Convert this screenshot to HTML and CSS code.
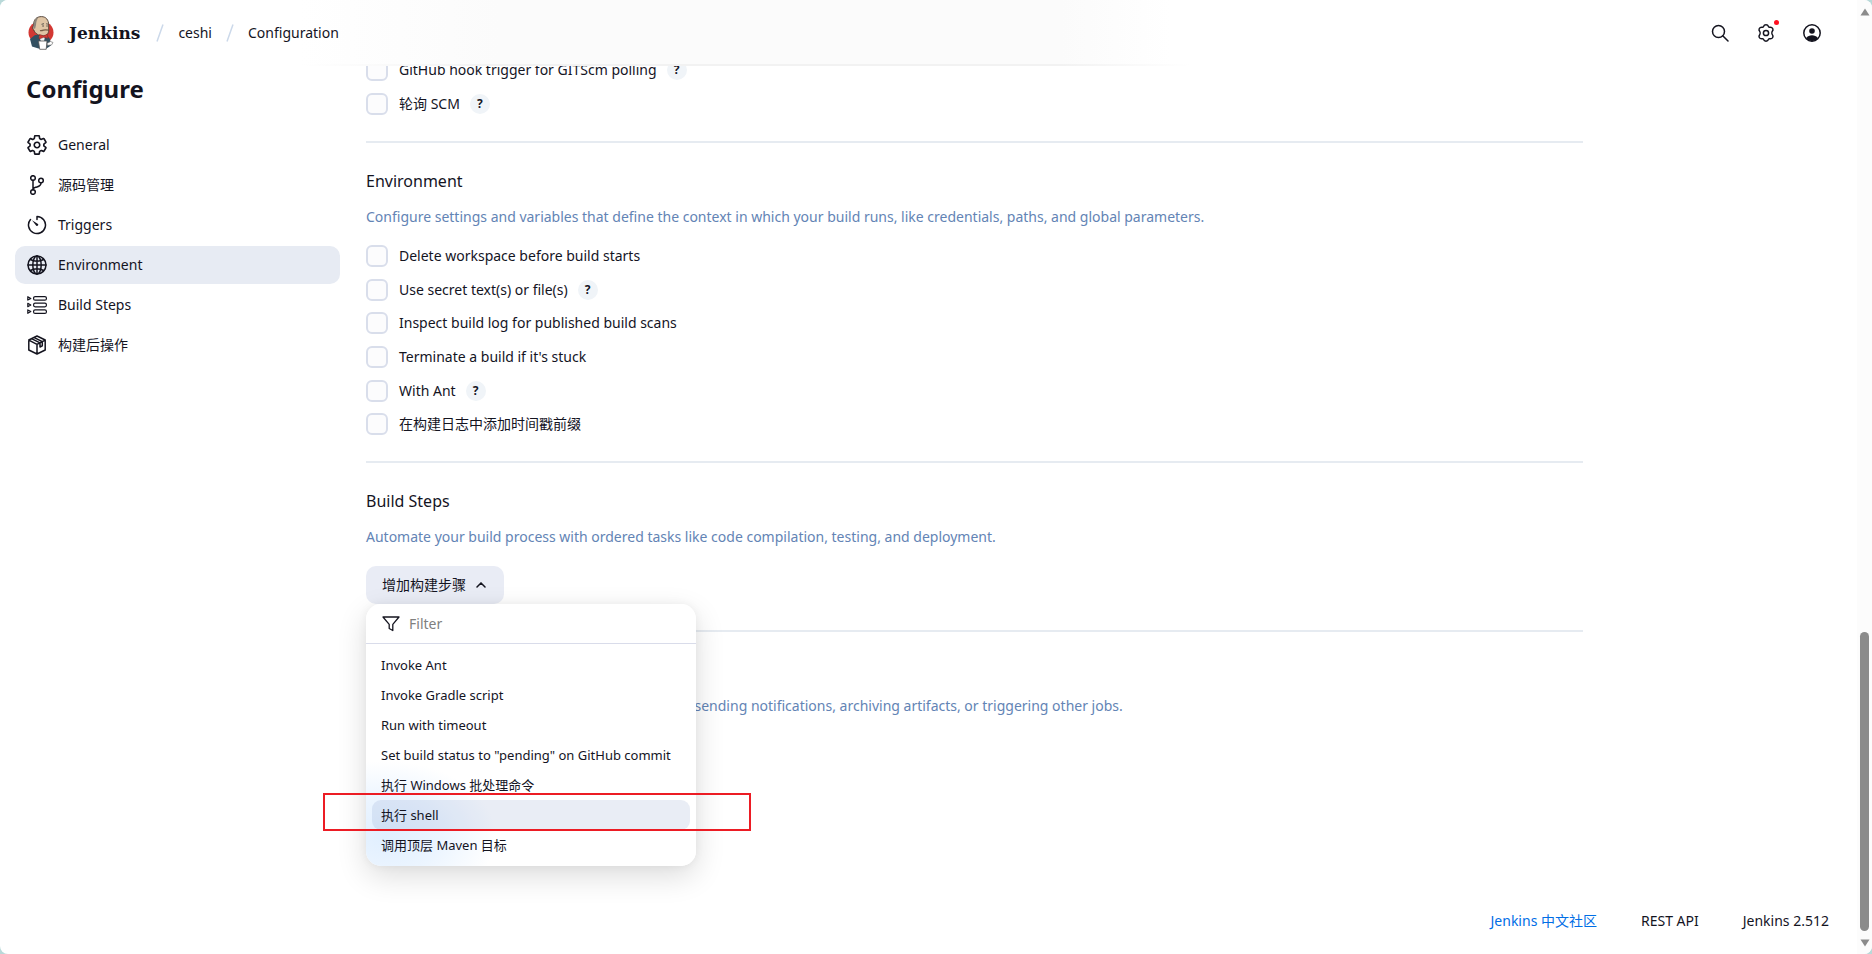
FILE: index.html
```html
<!DOCTYPE html>
<html lang="zh-CN">
<head>
<meta charset="utf-8">
<title>ceshi Config [Jenkins]</title>
<link rel="stylesheet" href="styles.css">
</head>
<body>
<div class="window">
  <div class="page">
    <header class="header">
      <a class="brand" href="#">
        <svg class="brand-logo" viewBox="0 0 26 34" aria-hidden="true">
          <ellipse cx="13" cy="16.500" rx="12.500" ry="11.500" fill="#d33833"/>
          <path d="M7 19 2 23l2 7.500 6.500 2h8l4.500-3-1-6.500-3.500-4z" fill="#335061"/>
          <path d="M11 20l2 5.500h3l1-5z" fill="#f3f3f3"/>
          <path d="M5.600 8C6 3 9 .6 13.500.6c4.500 0 7.200 3.400 7.200 8.400v5c0 4-2.500 6-5.700 6-4 0-8-2.500-9.200-6-1.400-.5-1.500-3.500-.2-4z" fill="#dfc5a5" stroke="#4a3b32" stroke-width=".9"/>
          <path d="M5.500 10C5.600 5 7.500 2 10.500 1.200 8.800 3.500 8.200 5.500 8 9l-.8 3.500-1.700.2z" fill="#8b857c"/>
          <path d="M13.500 8.300l2.500-.6M18.200 7.800l1.700.3" stroke="#333" stroke-width=".8"/>
          <path d="M14.200 10h1.800M18.300 10h1.500" stroke="#333" stroke-width=".8"/>
          <path d="M12 14.500c2 .9 4-.9 5.500-.7 1.200.2 2 .5 2.700 0" fill="none" stroke="#755c46" stroke-width="1.300"/>
          <path d="M11.500 18.500l4 1.300 4-1.500.5 4-4.300-1-4.700 1.700z" fill="#d33833" stroke="#81302a" stroke-width=".6"/>
          <path d="M10.500 25h8.500l-.8 8.300h-6.500z" fill="#fff" stroke="#555" stroke-width=".8"/>
          <path d="M19 27.500l3.500-2 2.500 1-1.500 2.500-4 .3z" fill="#fff" stroke="#777" stroke-width=".7"/>
        </svg>
        <span class="brand-name">Jenkins</span>
      </a>
      <nav class="crumbs" aria-label="Breadcrumb">
        <svg class="slash" viewBox="0 0 8 18" aria-hidden="true"><path d="M1 17.500 7 .5"/></svg>
        <a href="#">ceshi</a>
        <svg class="slash" viewBox="0 0 8 18" aria-hidden="true"><path d="M1 17.500 7 .5"/></svg>
        <a href="#">Configuration</a>
      </nav>
      <div class="actions">
        <button type="button" class="icon-button" aria-label="Search">
          <svg viewBox="0 0 18 18" class="icon"><circle cx="7.500" cy="7.500" r="6"/><path d="M12 12l5 5"/></svg>
        </button>
        <button type="button" class="icon-button" aria-label="Manage Jenkins">
          <svg viewBox="0 0 18 18" class="icon"><path d="M6.400 2.700C7 1.200 8 .8 9 .8s2 .4 2.600 1.900c.2.500.6.700 1.100.6 1.600-.2 2.500.3 3 1.200s.5 1.900-.5 3.100c-.4.500-.4 2.300 0 2.800 1 1.200 1 2.200.5 3.100s-1.400 1.400-3 1.200c-.5-.1-.9.100-1.100.6C11 16.800 10 17.200 9 17.200s-2-.4-2.600-1.900c-.2-.5-.6-.7-1.100-.6-1.600.2-2.500-.3-3-1.200s-.5-1.900.5-3.100c.4-.5.4-2.300 0-2.800-1-1.200-1-2.200-.5-3.100s1.400-1.400 3-1.200c.5.100.9-.1 1.100-.6z"/><circle cx="9" cy="9" r="2.600"/></svg>
          <span class="dot"></span>
        </button>
        <button type="button" class="icon-button" aria-label="User">
          <svg viewBox="0 0 18 18" class="icon"><circle cx="9" cy="9" r="8.200"/><circle cx="9" cy="7" r="2.800" class="solid"/><path class="solid" d="M3 14.200c1.500-2.200 3.700-2.900 6-2.900s4.500.7 6 2.900A8.200 8.200 0 0 1 9 17.200a8.200 8.200 0 0 1-6-3z"/></svg>
        </button>
      </div>
    </header>

    <div class="body">
      <aside class="sidebar">
        <h1 class="title">Configure</h1>
        <nav class="tasks">
          <a class="task" href="#general">
            <svg class="icon" viewBox="0 0 512 512"><g stroke-width="38" transform="translate(-26 -26) scale(1.100)"><path d="M262.290 192.310a64 64 0 1057.400 57.400 64.130 64.130 0 00-57.400-57.400zM416.390 256a154.340 154.340 0 01-1.530 20.790l45.210 35.460a10.810 10.810 0 012.450 13.750l-42.770 74a10.810 10.810 0 01-13.140 4.590l-44.900-18.080a16.110 16.110 0 00-15.170 1.750A164.480 164.480 0 01325 400.800a15.940 15.940 0 00-8.820 12.140l-6.730 47.890a11.080 11.080 0 01-10.680 9.170h-85.540a11.110 11.110 0 01-10.690-8.870l-6.720-47.820a16.070 16.070 0 00-9-12.220 155.300 155.300 0 01-21.460-12.570 16 16 0 00-15.110-1.710l-44.890 18.070a10.810 10.810 0 01-13.140-4.580l-42.770-74a10.800 10.800 0 012.450-13.750l38.210-30a16.050 16.050 0 006-14.080c-.36-4.170-.58-8.330-.58-12.500s.21-8.270.58-12.350a16 16 0 00-6.070-13.940l-38.190-30A10.810 10.810 0 0149.480 186l42.770-74a10.810 10.810 0 0113.140-4.590l44.900 18.080a16.110 16.110 0 0015.170-1.750A164.480 164.480 0 01187 111.200a15.940 15.940 0 008.820-12.140l6.730-47.890A11.080 11.080 0 01213.230 42h85.540a11.110 11.110 0 0110.690 8.870l6.720 47.820a16.070 16.070 0 009 12.220 155.300 155.300 0 0121.460 12.570 16 16 0 0015.110 1.710l44.890-18.070a10.810 10.810 0 0113.140 4.580l42.770 74a10.800 10.800 0 01-2.450 13.750l-38.210 30a16.050 16.050 0 00-6.050 14.080c.33 4.140.55 8.300.55 12.470z"/></g></svg>
            <span>General</span>
          </a>
          <a class="task" href="#scm">
            <svg class="icon" viewBox="0 0 20 20"><circle cx="6" cy="3" r="2.300"/><circle cx="6" cy="17" r="2.300"/><circle cx="14" cy="5.500" r="2.300"/><path d="M6 5.300v9.400M14 7.800c0 4-3.200 3.700-5.500 4.500C7 12.800 6 13.600 6 14.700"/></svg>
            <span>源码管理</span>
          </a>
          <a class="task" href="#triggers">
            <svg class="icon" viewBox="0 0 20 20"><path d="M10 4.500V1.500a8.500 8.500 0 1 1-6.500 3"/><path class="solid" d="M5 5.200l6 3.700a1.300 1.300 0 0 1-1.700 1.900z"/></svg>
            <span>Triggers</span>
          </a>
          <a class="task task--active" href="#environment" aria-current="true">
            <svg class="icon" viewBox="0 0 20 20"><circle cx="10" cy="10" r="9"/><ellipse cx="10" cy="10" rx="4.200" ry="9"/><path d="M10 1v18M1 10h18M3.500 4.500c3.500 2.200 9.500 2.200 13 0M3.500 15.500c3.500-2.200 9.500-2.200 13 0"/></svg>
            <span>Environment</span>
          </a>
          <a class="task" href="#build-steps">
            <svg class="icon icon--fine" viewBox="0 0 20 20"><rect x="6.600" y="1.600" width="12.800" height="3.600" rx="1.500"/><rect x="6.600" y="8.200" width="12.800" height="3.600" rx="1.500"/><rect x="6.600" y="14.800" width="12.800" height="3.600" rx="1.500"/><path d="M.8 1.700v3.400l3-1.700zM.8 8.300v3.400l3-1.700zM.8 14.900v3.400l3-1.700z"/></svg>
            <span>Build Steps</span>
          </a>
          <a class="task" href="#post-build">
            <svg class="icon" viewBox="0 0 20 20"><path d="M10 1l8.200 4v10L10 19l-8.200-4V5zM1.800 5.200l8.200 4.100 8.200-4.100M10 9.300V19M7.300 2.600l8 4v4.200l-2.300 1.200V7.900l-8-4"/></svg>
            <span>构建后操作</span>
          </a>
        </nav>
      </aside>

      <main class="main">
        <section class="section section--first" id="triggers">
          <div class="checks">
            <div class="check"><input type="checkbox" id="c1"><label for="c1">GitHub hook trigger for GITScm polling</label><button type="button" class="help">?</button></div>
            <div class="check"><input type="checkbox" id="c2"><label for="c2">轮询 SCM</label><button type="button" class="help">?</button></div>
          </div>
        </section>

        <section class="section" id="environment">
          <h2>Environment</h2>
          <p class="description">Configure settings and variables that define the context in which your build runs, like credentials, paths, and global parameters.</p>
          <div class="checks checks--spaced">
            <div class="check"><input type="checkbox" id="c3"><label for="c3">Delete workspace before build starts</label></div>
            <div class="check check--help"><input type="checkbox" id="c4"><label for="c4">Use secret text(s) or file(s)</label><button type="button" class="help">?</button></div>
            <div class="check"><input type="checkbox" id="c5"><label for="c5">Inspect build log for published build scans</label></div>
            <div class="check"><input type="checkbox" id="c6"><label for="c6">Terminate a build if it's stuck</label></div>
            <div class="check check--help"><input type="checkbox" id="c7"><label for="c7">With Ant</label><button type="button" class="help">?</button></div>
            <div class="check"><input type="checkbox" id="c8"><label for="c8">在构建日志中添加时间戳前缀</label></div>
          </div>
        </section>

        <section class="section" id="build-steps">
          <h2>Build Steps</h2>
          <p class="description">Automate your build process with ordered tasks like code compilation, testing, and deployment.</p>
          <div class="adder">
            <button type="button" class="add-button" aria-expanded="true">增加构建步骤
              <svg class="chevron" viewBox="0 0 10 6" aria-hidden="true"><path d="M1 5l4-4 4 4"/></svg>
            </button>
            <div class="dropdown">
              <div class="filter">
                <svg class="icon icon--filter" viewBox="0 0 18 16" aria-hidden="true"><path d="M1 1h16l-6.200 7.300v6.200l-3.600-2V8.300z"/></svg>
                <input type="text" placeholder="Filter" aria-label="Filter">
              </div>
              <div class="menu">
                <button type="button">Invoke Ant</button>
                <button type="button">Invoke Gradle script</button>
                <button type="button">Run with timeout</button>
                <button type="button">Set build status to "pending" on GitHub commit</button>
                <button type="button">执行 Windows 批处理命令</button>
                <button type="button" class="selected">执行 shell</button>
                <button type="button">调用顶层 Maven 目标</button>
              </div>
              <div class="marker"></div>
            </div>
          </div>
        </section>

        <section class="section section--last" id="post-build">
          <h2>构建后操作</h2>
          <p class="description">Define what happens after a build completes, like sending notifications, archiving artifacts, or triggering other jobs.</p>
        </section>
      </main>
    </div>

    <footer class="footer">
      <a class="community" href="#">Jenkins 中文社区</a>
      <a href="#">REST API</a>
      <button type="button">Jenkins 2.512</button>
    </footer>
  </div>

  <div class="scrollbar" aria-hidden="true">
    <svg class="arrow" viewBox="0 0 10 8"><path d="M5 .5 9.500 7.500H.5z"/></svg>
    <div class="track"><div class="thumb"></div></div>
    <svg class="arrow" viewBox="0 0 10 8"><path d="M5 7.500.5.5h9z"/></svg>
  </div>
</div>
</body>
</html>
```
FILE: styles.css
```css
* { box-sizing: border-box; }

:root {
  --text: #14141f;
  --muted: #6384b5;
  --line: #e6ebf1;
  --item: #e7ebf3;
}

body {
  margin: 0;
  background: #b9d9d9;
  color: var(--text);
  font-family: "Noto Sans", "Noto Sans CJK SC", sans-serif;
  font-size: 14px;
  line-height: 24px;
}

a { color: inherit; text-decoration: none; }

button {
  border: 0;
  padding: 0;
  background: none;
  color: inherit;
  font: inherit;
  cursor: pointer;
}

h1, h2, p { margin: 0; }

.window {
  display: flex;
  min-height: 100vh;
  background: #fff;
  border-radius: 8px;
  overflow: hidden;
}

.page {
  flex: 1;
  display: flex;
  flex-direction: column;
}

.icon {
  flex: none;
  width: 20px;
  height: 20px;
  fill: none;
  stroke: currentColor;
  stroke-width: 1.5;
  stroke-linecap: round;
  stroke-linejoin: round;
}
.icon--fine { stroke-width: 1.2; }
.icon .solid { fill: currentColor; stroke: none; }

/* Header */
.header {
  position: relative;
  z-index: 2;
  display: flex;
  align-items: center;
  height: 66px;
  padding: 0 36px 0 28px;
  background:
    linear-gradient(90deg, #fff 300px, #f2f2f2 500px, #f2f2f2 1060px, #fff 1190px) bottom / 100% 2px no-repeat,
    linear-gradient(90deg, #fff 300px, #fbfbfb 500px, #fbfbfb 1060px, #fff 1170px);
}
.brand { display: flex; align-items: center; gap: 15px; }
.brand-logo { width: 26px; height: 34px; }
.brand-name { font: bold 17px/24px "DejaVu Serif", serif; }
.crumbs { display: flex; align-items: center; gap: 14px; margin-left: 16px; }
.slash { width: 8px; height: 18px; fill: none; stroke: #ccd9ea; stroke-width: 1.5; }
.actions { display: flex; gap: 28px; margin-left: auto; }
.icon-button { position: relative; display: flex; }
.icon-button .icon { width: 18px; height: 18px; }
.dot {
  position: absolute;
  top: -4px;
  right: -4px;
  width: 5px;
  height: 5px;
  border-radius: 50%;
  background: #ff1020;
}

/* Sidebar */
.body { display: flex; }
.sidebar { width: 340px; padding: 7px 0 0 15px; }
.title { padding-left: 11px; font-size: 24px; line-height: 32px; }
.tasks { display: flex; flex-direction: column; gap: 2px; margin-top: 21px; }
.task {
  display: flex;
  align-items: center;
  gap: 11px;
  height: 38px;
  padding: 0 12px;
  border-radius: 10px;
}
.task--active { background: var(--item); }

/* Form */
.main { flex: 1; max-width: 1243px; padding-left: 26px; }
.section { padding: 26px 0; border-bottom: 2px solid var(--line); }
.section--first { margin-top: -7px; padding-top: 0; }
.section--last { border-bottom: 0; }
h2 { font-size: 16px; font-weight: 400; }
.description { margin-top: 12px; color: var(--muted); }
.checks--spaced { margin-top: 16px; }
.check { display: flex; align-items: center; height: 22px; margin-bottom: 12px; }
.check--help { margin-bottom: 11px; }
.check:last-child { margin-bottom: 0; }
.check input {
  appearance: none;
  width: 22px;
  height: 22px;
  margin: 0 11px 0 0;
  border: 2px solid #d9deeb;
  border-radius: 6px;
  background: #fcfcfd;
}
.help {
  width: 20px;
  height: 20px;
  margin-left: 10px;
  border-radius: 50%;
  background: #f0f4f8;
  font-size: 12px;
  font-weight: 700;
  line-height: 20px;
}

.adder { position: relative; display: flex; margin-top: 17px; }
.add-button {
  display: flex;
  align-items: center;
  gap: 10px;
  height: 38px;
  padding: 0 18px 0 16px;
  border-radius: 10px;
  background: #e9ecf5;
}
.chevron { width: 10px; height: 6px; fill: none; stroke: currentColor; stroke-width: 1.5; stroke-linecap: round; }

.dropdown {
  position: absolute;
  top: 100%;
  left: 0;
  z-index: 3;
  width: 330px;
  border-radius: 15px;
  background: radial-gradient(110px 75px at 20px 232px, #e0efff 0, #ecf5ff 50%, #fff 100%);
  box-shadow: 0 10px 30px rgba(0, 0, 0, .14), 0 0 10px rgba(0, 0, 0, .05);
}
.filter {
  display: flex;
  align-items: center;
  gap: 9px;
  height: 40px;
  padding: 0 16px;
  border-bottom: 1px solid #d9dcea;
}
.icon--filter { width: 18px; height: 16px; stroke-width: 1.3; }
.filter input {
  flex: 1;
  min-width: 0;
  border: 0;
  padding: 0;
  outline: 0;
  background: none;
  color: inherit;
  font: inherit;
}
.filter input::placeholder { color: #808080; }
.menu { display: flex; flex-direction: column; padding: 6px; font-size: 13px; }
.menu button {
  height: 30px;
  padding: 0 9px;
  border-radius: 9px;
  text-align: left;
  white-space: nowrap;
}
.menu .selected { background: rgba(120, 140, 190, .16); }
.marker {
  position: absolute;
  top: 189px;
  left: -43px;
  width: 428px;
  height: 38px;
  border: 2px solid #ec1c24;
  pointer-events: none;
}

/* Footer */
.footer {
  display: flex;
  justify-content: flex-end;
  gap: 44px;
  margin-top: auto;
  padding: 0 28px 21px;
}
.community { color: #006ee6; }

/* Window scrollbar */
.scrollbar {
  display: flex;
  flex-direction: column;
  align-items: center;
  width: 15px;
  padding: 8px 0 7px;
  background: #fcfcfc;
}
.arrow { width: 10px; height: 8px; fill: #8b8b8b; }
.track { flex: 1; display: flex; align-items: flex-end; padding: 8px 0; }
.thumb { width: 9px; height: 33%; border-radius: 5px; background: #8b8b8b; }
```
